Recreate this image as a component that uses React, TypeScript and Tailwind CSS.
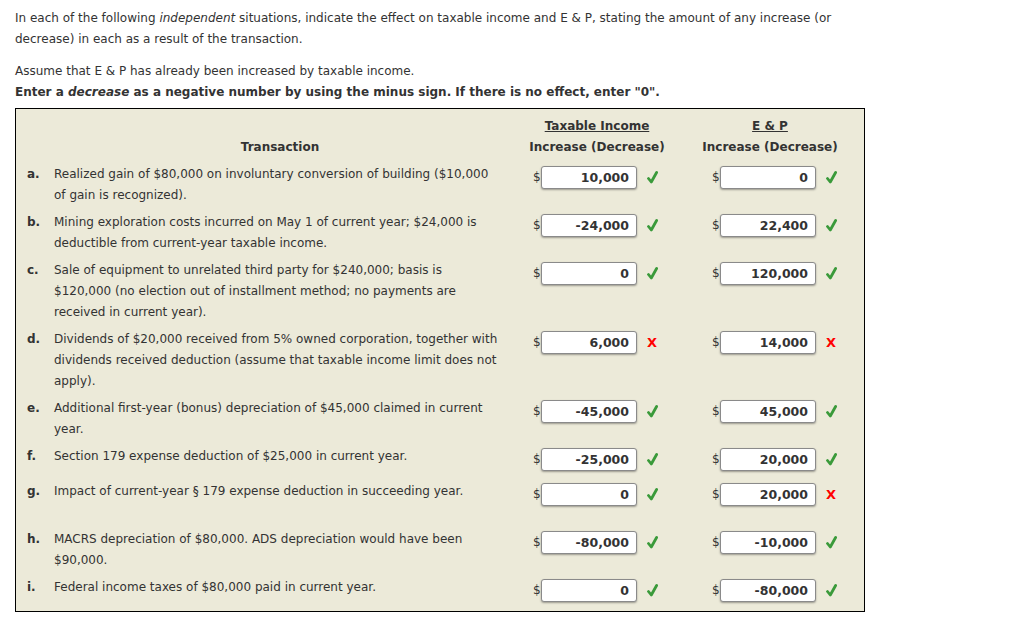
import React from "react";

type Row = {
  letter: string;
  text: string;
  ti: string;
  tiOk: boolean;
  ep: string;
  epOk: boolean;
  tall?: boolean;
};

const rows: Row[] = [
  { letter: "a.", text: "Realized gain of $80,000 on involuntary conversion of building ($10,000 of gain is recognized).", ti: "10,000", tiOk: true, ep: "0", epOk: true },
  { letter: "b.", text: "Mining exploration costs incurred on May 1 of current year; $24,000 is deductible from current-year taxable income.", ti: "-24,000", tiOk: true, ep: "22,400", epOk: true },
  { letter: "c.", text: "Sale of equipment to unrelated third party for $240,000; basis is $120,000 (no election out of installment method; no payments are received in current year).", ti: "0", tiOk: true, ep: "120,000", epOk: true },
  { letter: "d.", text: "Dividends of $20,000 received from 5% owned corporation, together with dividends received deduction (assume that taxable income limit does not apply).", ti: "6,000", tiOk: false, ep: "14,000", epOk: false },
  { letter: "e.", text: "Additional first-year (bonus) depreciation of $45,000 claimed in current year.", ti: "-45,000", tiOk: true, ep: "45,000", epOk: true },
  { letter: "f.", text: "Section 179 expense deduction of $25,000 in current year.", ti: "-25,000", tiOk: true, ep: "20,000", epOk: true },
  { letter: "g.", text: "Impact of current-year § 179 expense deduction in succeeding year.", ti: "0", tiOk: true, ep: "20,000", epOk: false, tall: true },
  { letter: "h.", text: "MACRS depreciation of $80,000. ADS depreciation would have been $90,000.", ti: "-80,000", tiOk: true, ep: "-10,000", epOk: true },
  { letter: "i.", text: "Federal income taxes of $80,000 paid in current year.", ti: "0", tiOk: true, ep: "-80,000", epOk: true },
];

function Mark({ ok }: { ok: boolean }) {
  if (!ok) {
    return <span className="ml-[10px] text-[13px] font-bold leading-none text-[#ff0000]">X</span>;
  }
  return (
    <svg className="ml-[10px]" width="11" height="13" viewBox="0 0 11 13">
      <path d="M1.5 7.5 L4.3 11 L9.6 1.5" fill="none" stroke="#3a9a3a" strokeWidth="2.8" strokeLinecap="round" strokeLinejoin="round" />
    </svg>
  );
}

function Money({ value, ok, pad }: { value: string; ok: boolean; pad: string }) {
  return (
    <div className={`flex items-center pt-[2px] pb-[4px] ${pad}`}>
      <span className="w-[8px] text-[12px] text-[#333]">$</span>
      <div className="flex h-[23px] w-[96px] items-center justify-end rounded-[3px] border border-[#8a8a8a] bg-white pr-[7px] text-[12.5px] font-bold text-[#333] shadow-[0_1px_2px_rgba(0,0,0,0.35)]">
        {value}
      </div>
      <Mark ok={ok} />
    </div>
  );
}

export default function App() {
  return (
    <div className="min-h-[622px] bg-white pl-[15px] pt-[8px] font-['DejaVu_Sans',Verdana,sans-serif] text-[12px] leading-[21px] text-[#333]">
      <p className="w-[830px]">
        In each of the following <i>independent</i> situations, indicate the effect on taxable income and E &amp; P, stating the amount of any increase (or decrease) in each as a result of the transaction.
      </p>
      <p className="mt-[11px]">Assume that E &amp; P has already been increased by taxable income.</p>
      <p className="font-bold">
        Enter a <i>decrease</i> as a negative number by using the minus sign. If there is no effect, enter "0".
      </p>

      <div className="mt-[5px] w-[850px] border border-black bg-[#ecead9] pb-[5px] pt-[7px]">
        <div className="flex font-bold">
          <div className="w-[38px]" />
          <div className="flex w-[452px] items-end justify-center">
            <span>Transaction</span>
          </div>
          <div className="w-[182px] text-center">
            <div className="underline">Taxable Income</div>
            <div>Increase (Decrease)</div>
          </div>
          <div className="w-[164px] text-center">
            <div className="underline">E &amp; P</div>
            <div>Increase (Decrease)</div>
          </div>
        </div>

        {rows.map((r) => (
          <div key={r.letter} className="flex items-start pt-[6px]">
            <div className="w-[38px] pl-[11px] font-bold">{r.letter}</div>
            <div className={`w-[452px] pr-[4px] ${r.tall ? "min-h-[42px]" : ""}`}>{r.text}</div>
            <div className="w-[182px]">
              <Money value={r.ti} ok={r.tiOk} pad="pl-[27px]" />
            </div>
            <div className="w-[164px]">
              <Money value={r.ep} ok={r.epOk} pad="pl-[24px]" />
            </div>
          </div>
        ))}
      </div>
    </div>
  );
}
